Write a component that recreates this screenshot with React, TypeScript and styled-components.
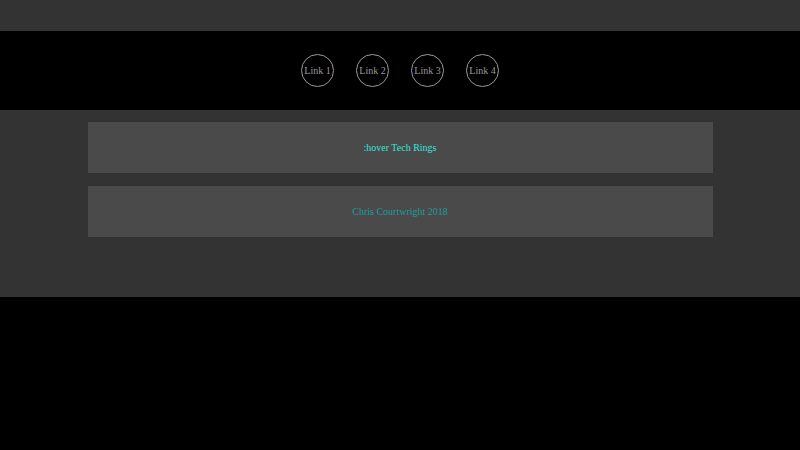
import React from 'react';
import styled, { createGlobalStyle } from 'styled-components';

const GlobalStyle = createGlobalStyle`
  html, body {
    margin: 0;
    padding: 0;
    background: #000000;
    font-family: "Liberation Serif", "Times New Roman", serif;
    font-size: 10px;
  }
`;

const TopBar = styled.header`
  height: 31px;
  background: #333333;
`;

const Nav = styled.nav`
  height: 79px;
  background: #000000;
  display: flex;
  justify-content: center;
  align-items: center;
  gap: 22px;
`;

const Ring = styled.a`
  width: 31px;
  height: 31px;
  border: 1px solid #9a9a9a;
  border-radius: 50%;
  display: flex;
  align-items: center;
  justify-content: center;
  color: #9a9a9a;
  text-decoration: none;
  font-size: 10px;
  white-space: nowrap;
`;

const Main = styled.main`
  background: #333333;
  padding: 12px 0 60px;
  display: flex;
  flex-direction: column;
  align-items: center;
  gap: 13px;
`;

const Card = styled.section<{ $tone: string }>`
  width: 625px;
  height: 51px;
  background: #4a4a4a;
  display: flex;
  align-items: center;
  justify-content: center;
  color: ${p => p.$tone};
  font-size: 10px;
`;

const links = ['Link 1', 'Link 2', 'Link 3', 'Link 4'];

const App: React.FC = () => (
  <>
    <GlobalStyle />
    <TopBar />
    <Nav>
      {links.map(l => (
        <Ring key={l} href="#">
          {l}
        </Ring>
      ))}
    </Nav>
    <Main>
      <Card $tone="#33e6dc">:hover Tech Rings</Card>
      <Card $tone="#1b9c9c">Chris Courtwright 2018</Card>
    </Main>
  </>
);

export default App;
